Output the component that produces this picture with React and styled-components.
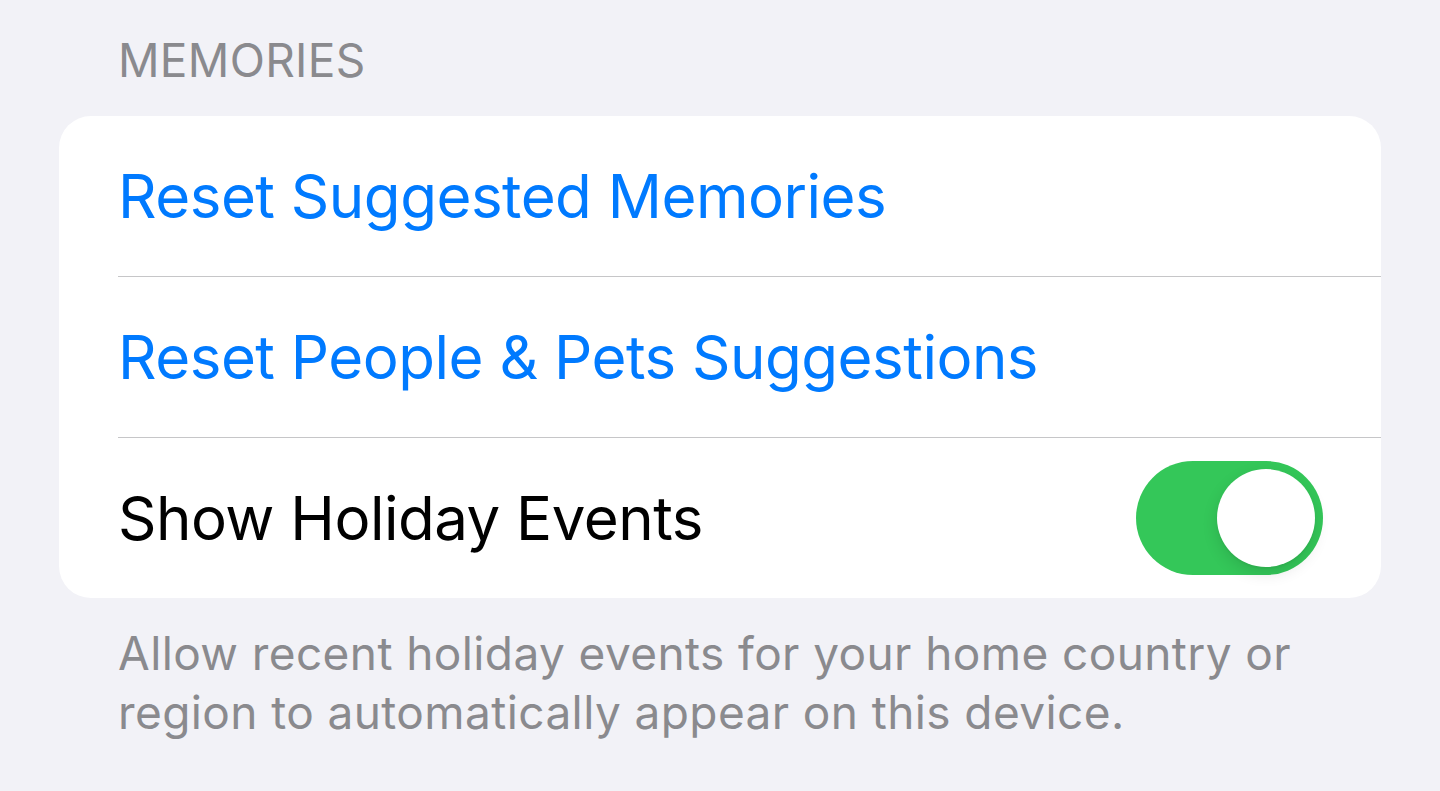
import React, { useState } from 'react';
import styled, { createGlobalStyle } from 'styled-components';

const GlobalStyle = createGlobalStyle`
  html, body {
    margin: 0;
    padding: 0;
    background: #f2f2f7;
  }
  body {
    font-family: Inter, 'Noto Sans', 'Liberation Sans', sans-serif;
    -webkit-font-smoothing: antialiased;
  }
`;

const Page = styled.div`
  width: 1440px;
  height: 791px;
  box-sizing: border-box;
  padding: 33px 59px 0 59px;
  background: #f2f2f7;
  overflow: hidden;
`;

const SectionHeader = styled.div`
  padding-left: 59px;
  font-size: 46px;
  line-height: 1.2;
  color: #8a8a8e;
  letter-spacing: 0.3px;
  margin-bottom: 28px;
`;

const Card = styled.div`
  background: #fff;
  border-radius: 32px;
  overflow: hidden;
`;

const Row = styled.div`
  padding-left: 59px;
`;

const RowInner = styled.div`
  height: 160.7px;
  box-sizing: border-box;
  display: flex;
  align-items: center;
  justify-content: space-between;
  padding-right: 58px;
  border-bottom: ${(p) => (p.last ? 'none' : '1.5px solid #c6c6c8')};
`;

const Label = styled.span`
  font-size: 60px;
  color: ${(p) => (p.action ? '#007aff' : '#000')};
  letter-spacing: -0.5px;
`;

const Track = styled.button`
  position: relative;
  width: 187px;
  height: 114px;
  border: none;
  padding: 0;
  border-radius: 57px;
  background: ${(p) => (p.on ? '#34c759' : '#e9e9ea')};
  cursor: pointer;
  transition: background 0.2s;
`;

const Knob = styled.span`
  position: absolute;
  top: 8px;
  left: ${(p) => (p.on ? '81px' : '8px')};
  width: 98px;
  height: 98px;
  border-radius: 50%;
  background: #fff;
  box-shadow: 0 6px 16px rgba(0, 0, 0, 0.12), 0 2px 2px rgba(0, 0, 0, 0.04);
  transition: left 0.2s;
`;

const Footer = styled.div`
  padding-left: 59px;
  margin-top: 26px;
  font-size: 46px;
  line-height: 59px;
  letter-spacing: 0.4px;
  color: #8a8a8e;
`;

const Toggle = ({ on, onChange }) => (
  <Track on={on ? 1 : 0} onClick={() => onChange(!on)}>
    <Knob on={on ? 1 : 0} />
  </Track>
);

const App = () => {
  const [holidays, setHolidays] = useState(true);

  return (
    <Page>
      <GlobalStyle />
      <SectionHeader>MEMORIES</SectionHeader>
      <Card>
        <Row>
          <RowInner>
            <Label action>Reset Suggested Memories</Label>
          </RowInner>
        </Row>
        <Row>
          <RowInner>
            <Label action>Reset People &amp; Pets Suggestions</Label>
          </RowInner>
        </Row>
        <Row>
          <RowInner last>
            <Label>Show Holiday Events</Label>
            <Toggle on={holidays} onChange={setHolidays} />
          </RowInner>
        </Row>
      </Card>
      <Footer>
        Allow recent holiday events for your home country or
        <br />
        region to automatically appear on this device.
      </Footer>
    </Page>
  );
};

export default App;
